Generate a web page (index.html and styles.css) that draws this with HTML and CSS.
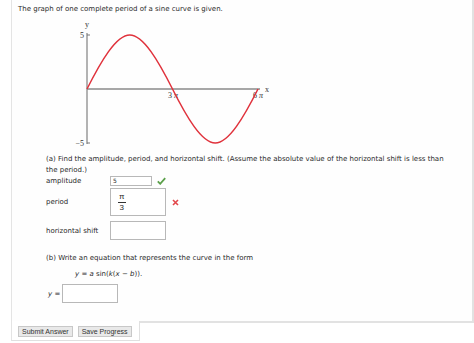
FILE: index.html
```html
<!DOCTYPE html>
<html lang="en">
<head>
    <meta charset="UTF-8">
    <title>Sine curve question</title>
    <link rel="stylesheet" href="styles.css">
</head>
<body>
    <div class="panel">
        <p class="intro">The graph of one complete period of a sine curve is given.</p>

        <svg class="graph" width="210" height="134" viewBox="0 0 210 134">
            <!-- axes -->
            <line class="axis" x1="17" y1="18" x2="17" y2="129"/>
            <line class="axis" x1="17" y1="74" x2="190" y2="74"/>
            <line class="tick" x1="17" y1="20" x2="20" y2="20"/>
            <line class="tick" x1="17" y1="128" x2="20" y2="128"/>
            <text class="lbl" x="15" y="12">y</text>
            <text class="lbl" x="195" y="77">x</text>
            <text class="lbl end" x="14" y="23">5</text>
            <text class="lbl end" x="14" y="131">&#8722;5</text>
            <text class="lbl" x="98" y="83">3 <tspan font-style="italic">π</tspan></text>
            <text class="lbl" x="183" y="83">6 <tspan font-style="italic">π</tspan></text>
            <!-- curve -->
            <path class="curve" d="M17,74 C30.95,46.32 46.14,20 59.75,20 C73.36,20 88.55,46.32 102.5,74 C116.45,101.68 131.64,128 145.25,128 C158.86,128 174.05,101.68 188,74"/>
        </svg>

        <div class="part">
            <p class="question">(a) Find the amplitude, period, and horizontal shift. (Assume the absolute value of the horizontal shift is less than the period.)</p>

            <div class="row">
                <span class="label">amplitude</span>
                <span class="field small">5</span>
                <svg class="mark" width="9" height="8" viewBox="0 0 9 8">
                    <path d="M0.8,4.4 L3.2,6.8 L8.2,1.2" fill="none" stroke="#5ba04a" stroke-width="1.8"/>
                </svg>
            </div>

            <div class="row gap-s">
                <span class="label">period</span>
                <span class="field tall">
                    <span class="frac">
                        <span class="num">π</span>
                        <span class="den">3</span>
                    </span>
                </span>
                <svg class="mark cross" width="7" height="7" viewBox="0 0 7 7">
                    <path d="M1,1 L6,6 M6,1 L1,6" stroke="#e2474b" stroke-width="1.6"/>
                </svg>
            </div>

            <div class="row gap-m">
                <span class="label">horizontal shift</span>
                <span class="field"></span>
            </div>

            <p class="question part-b">(b) Write an equation that represents the curve in the form</p>
            <p class="equation"><i>y</i> = <i>a</i> sin(<i>k</i>(<i>x</i> &#8722; <i>b</i>)).</p>

            <div class="row answer">
                <span class="y-label"><i>y</i> =</span>
                <span class="field"></span>
            </div>
        </div>
    </div>

    <div class="footer">
        <div class="tab">
            <button class="btn">Submit Answer</button>
            <button class="btn">Save Progress</button>
        </div>
        <div class="rest"></div>
    </div>
</body>
</html>
```

FILE: styles.css
```css
* {
    margin: 0;
    padding: 0;
    box-sizing: border-box;
}

body {
    font-family: "DejaVu Sans", Verdana, sans-serif;
    font-size: 7px;
    color: #2a2a2a;
    background: #fff;
}

.panel {
    margin-left: 11px;
    width: 463px;
    height: 321px;
    border-left: 1px solid #e4e4e4;
    border-right: 2px solid #e2e2e2;
    background: #fefefe;
}

.intro {
    padding: 3px 0 0 6px;
    line-height: 12px;
}

.graph {
    display: block;
    margin-left: 58px;
}

.axis {
    stroke: #8a8a8a;
    stroke-width: 1.3;
}

.tick {
    stroke: #777;
    stroke-width: 1;
}

.lbl {
    font-family: "Liberation Serif", "DejaVu Serif", serif;
    font-size: 8px;
    fill: #333;
}

.lbl.end {
    text-anchor: end;
}

.curve {
    fill: none;
    stroke: #e0323c;
    stroke-width: 1.5;
}

.part {
    padding-left: 34px;
    margin-top: 5px;
}

.question {
    line-height: 11px;
    width: 410px;
}

.row {
    display: flex;
    align-items: center;
}

.gap-s {
    margin-top: 2px;
}

.gap-m {
    margin-top: 5px;
}

.label {
    width: 64px;
}

.field {
    display: block;
    width: 56px;
    height: 19px;
    border: 1px solid #b8b8b8;
    background: #fff;
}

.field.small {
    width: 42px;
    height: 10px;
    font-size: 6px;
    line-height: 8px;
    padding-left: 2px;
}

.field.tall {
    height: 28px;
    padding: 3px 0 0 7px;
}

.frac {
    display: inline-flex;
    flex-direction: column;
    align-items: center;
    font-family: "Liberation Sans", Arial, sans-serif;
    font-size: 8px;
    line-height: 9px;
}

.frac .num {
    border-bottom: 1px solid #333;
    padding: 0 1px 1px;
}

.mark {
    margin-left: 5px;
}

.mark.cross {
    margin-left: 6px;
}

.part-b {
    margin-top: 13px;
}

.equation {
    margin: 5px 0 0 29px;
    line-height: 11px;
}

.answer {
    margin-top: 4px;
}

.y-label {
    width: 16px;
    padding-left: 2px;
}

.footer {
    display: flex;
    margin-left: 11px;
    width: 463px;
}

.tab {
    width: 129px;
    height: 20px;
    border-left: 1px solid #e4e4e4;
    border-right: 1px solid #e0e0e0;
    border-bottom: 1px solid #e0e0e0;
    padding: 5px 0 0 6px;
    display: flex;
    gap: 5px;
    align-items: flex-start;
}

.rest {
    flex: 1;
    border-top: 2px solid #e2e2e2;
}

.btn {
    font-family: "Liberation Sans", Arial, sans-serif;
    font-size: 7px;
    color: #333;
    background: #e9e9e9;
    border: 1px solid #c8c8c8;
    height: 11px;
    padding: 0 3px;
    line-height: 9px;
}
```
